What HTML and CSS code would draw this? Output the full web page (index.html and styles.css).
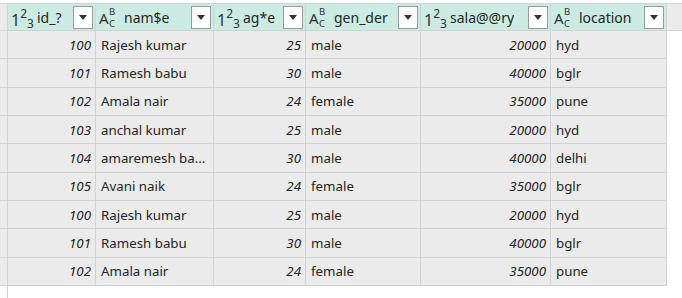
FILE: index.html
```html
<!DOCTYPE html>
<html>
<head>
<meta charset="utf-8">
<link rel="stylesheet" href="styles.css">
</head>
<body>
<div class="grid">
  <div class="hd gut"></div>
  <div class="hd"><span class="ico num"><span class="big">1</span><span class="hi">2</span><span class="lo">3</span></span><span class="lbl">id_?</span><span class="dd"></span></div>
  <div class="hd"><span class="ico abc"><span class="big a">A</span><span class="stack"><span>B</span><span>C</span></span></span><span class="lbl">nam$e</span><span class="dd"></span></div>
  <div class="hd"><span class="ico num"><span class="big">1</span><span class="hi">2</span><span class="lo">3</span></span><span class="lbl">ag*e</span><span class="dd"></span></div>
  <div class="hd"><span class="ico abc"><span class="big a">A</span><span class="stack"><span>B</span><span>C</span></span></span><span class="lbl">gen_der</span><span class="dd"></span></div>
  <div class="hd"><span class="ico num"><span class="big">1</span><span class="hi">2</span><span class="lo">3</span></span><span class="lbl">sala@@ry</span><span class="dd"></span></div>
  <div class="hd"><span class="ico abc"><span class="big a">A</span><span class="stack"><span>B</span><span>C</span></span></span><span class="lbl">location</span><span class="dd"></span></div>
  <div class="hd rest"></div>

  <div class="c gut"></div><div class="c n">100</div><div class="c t">Rajesh kumar</div><div class="c n">25</div><div class="c t">male</div><div class="c n">20000</div><div class="c t">hyd</div><div class="c rest"></div>
  <div class="c gut"></div><div class="c n">101</div><div class="c t">Ramesh babu</div><div class="c n">30</div><div class="c t">male</div><div class="c n">40000</div><div class="c t">bglr</div><div class="c rest"></div>
  <div class="c gut"></div><div class="c n">102</div><div class="c t">Amala nair</div><div class="c n">24</div><div class="c t">female</div><div class="c n">35000</div><div class="c t">pune</div><div class="c rest"></div>
  <div class="c gut"></div><div class="c n">103</div><div class="c t">anchal kumar</div><div class="c n">25</div><div class="c t">male</div><div class="c n">20000</div><div class="c t">hyd</div><div class="c rest"></div>
  <div class="c gut"></div><div class="c n">104</div><div class="c t">amaremesh ba...</div><div class="c n">30</div><div class="c t">male</div><div class="c n">40000</div><div class="c t">delhi</div><div class="c rest"></div>
  <div class="c gut"></div><div class="c n">105</div><div class="c t">Avani naik</div><div class="c n">24</div><div class="c t">female</div><div class="c n">35000</div><div class="c t">bglr</div><div class="c rest"></div>
  <div class="c gut"></div><div class="c n">100</div><div class="c t">Rajesh kumar</div><div class="c n">25</div><div class="c t">male</div><div class="c n">20000</div><div class="c t">hyd</div><div class="c rest"></div>
  <div class="c gut"></div><div class="c n">101</div><div class="c t">Ramesh babu</div><div class="c n">30</div><div class="c t">male</div><div class="c n">40000</div><div class="c t">bglr</div><div class="c rest"></div>
  <div class="c gut"></div><div class="c n">102</div><div class="c t">Amala nair</div><div class="c n">24</div><div class="c t">female</div><div class="c n">35000</div><div class="c t">pune</div><div class="c rest"></div>
  <div class="tail gut"></div>
</div>
</body>
</html>
```

FILE: styles.css
```css
html, body {
  margin: 0;
  padding: 0;
  background: #ffffff;
}
body {
  font-family: "Segoe UI", "Noto Sans", "Open Sans", sans-serif;
  color: #252525;
  width: 682px;
  height: 298px;
  overflow: hidden;
}
.grid {
  display: grid;
  grid-template-columns: 8px 88px 118px 92px 115px 130px 116px 1fr;
  grid-template-rows: 27px repeat(9, 28.33px) 12px;
  margin-top: 3px;
  border-top: 1px solid #d2d2d2;
}
.hd {
  background: #ccece3;
  border-right: 1px solid #d2d2d2;
  border-bottom: 1px solid #d2d2d2;
  display: flex;
  align-items: center;
  padding-left: 3px;
  font-size: 14px;
  min-width: 0;
}
.hd.gut, .hd.rest {
  background: #ebebeb;
  padding: 0;
}
.hd.rest { border-right: none; }
.ico {
  display: flex;
  height: 22px;
  flex: none;
  color: #333;
  white-space: nowrap;
  margin-top: 1px;
}
.ico.num { width: 26px; }
.ico.abc { width: 25px; height: 26px; margin-top: 0; }
.big {
  font-size: 16px;
  line-height: 16px;
  align-self: flex-end;
  margin-bottom: 1px;
}
.hi {
  font-size: 12px;
  line-height: 12px;
  align-self: flex-start;
  margin-top: 1px;
}
.lo {
  font-size: 12px;
  line-height: 12px;
  align-self: flex-end;
  margin-bottom: -1px;
}
.big.a {
  font-size: 15px;
  line-height: 15px;
  margin-bottom: 4px;
}
.stack {
  display: flex;
  flex-direction: column;
  font-size: 9.5px;
  line-height: 13px;
  padding-left: 0.5px;
}
.stack span:first-child {
  margin-top: 1px;
  margin-bottom: -1px;
}
.lbl {
  white-space: nowrap;
  overflow: hidden;
}
.dd {
  margin-left: auto;
  margin-right: 2px;
  width: 18px;
  height: 21px;
  flex: none;
  background: #ffffff;
  border: 1px solid #9a9a9a;
  display: flex;
  align-items: center;
  justify-content: center;
}
.dd::after {
  content: "";
  width: 0;
  height: 0;
  border-left: 4.5px solid transparent;
  border-right: 4.5px solid transparent;
  border-top: 5px solid #333;
  margin-top: 1px;
}
.c {
  background: #ebebeb;
  border-right: 1px solid #d2d2d2;
  border-bottom: 1px solid #d2d2d2;
  font-size: 13.3px;
  display: flex;
  align-items: center;
  white-space: nowrap;
  overflow: hidden;
  min-width: 0;
}
.c.n {
  justify-content: flex-end;
  font-style: italic;
  padding-right: 4px;
}
.c.t {
  padding-left: 5px;
}
.c.rest {
  background: #ffffff;
  border: none;
}
.tail {
  border-right: 1px solid #d2d2d2;
}
```
